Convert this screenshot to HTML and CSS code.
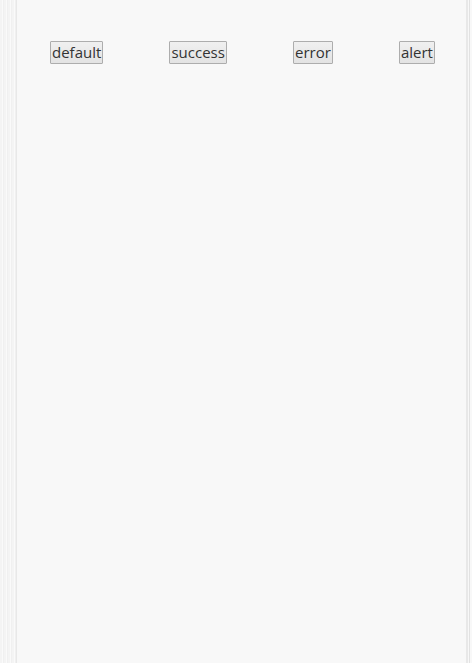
FILE: index.html
```html
<!doctype html>
<html lang="en">
  <head>
    <meta charset="UTF-8" />
    <meta name="viewport" content="width=device-width, initial-scale=1.0" />
    <title>Notifications</title>
    <link rel="stylesheet" href="styles.css">
  </head>
  <body>
    <div class="frame">
      <div class="side"></div>
      <div class="panel">
        <div class="buttons">
          <button class="btn">default</button>
          <button class="btn">success</button>
          <button class="btn">error</button>
          <button class="btn">alert</button>
        </div>
      </div>
      <div class="edge"></div>
    </div>
  </body>
</html>
```

FILE: styles.css
```css
html, body {
  margin: 0;
  height: 100%;
}
body {
  font-family: 'Open Sans', 'Noto Sans', sans-serif;
  background-color: #f8f8f8;
}
.frame {
  display: flex;
  height: 100%;
}
.side {
  width: 16px;
  flex: none;
  background: repeating-linear-gradient(90deg, #f4f4f4 0px, #f4f4f4 2px, #fafafa 2px, #fafafa 3px, #f0f0f0 3px, #f0f0f0 4px);
  border-right: 1px solid #e8e8e8;
}
.panel {
  flex: 1;
  background-color: #f8f8f8;
}
.edge {
  width: 1px;
  flex: none;
  background-color: #e2e2e2;
  border-left: 1px solid #f8f8f8;
  box-shadow: -2px 0 0 #e8e8e8;
  margin-right: 2px;
}
.buttons {
  display: flex;
  justify-content: space-between;
  padding: 41px 33px 0 33px;
}
.btn {
  font-family: 'Open Sans', 'Noto Sans', sans-serif;
  font-size: 15px;
  color: #333;
  height: 23px;
  padding: 0 1px;
  line-height: 21px;
  background: linear-gradient(#f0f0f0, #e3e3e3);
  border: 1px solid #adadad;
  border-radius: 1px;
}
```
